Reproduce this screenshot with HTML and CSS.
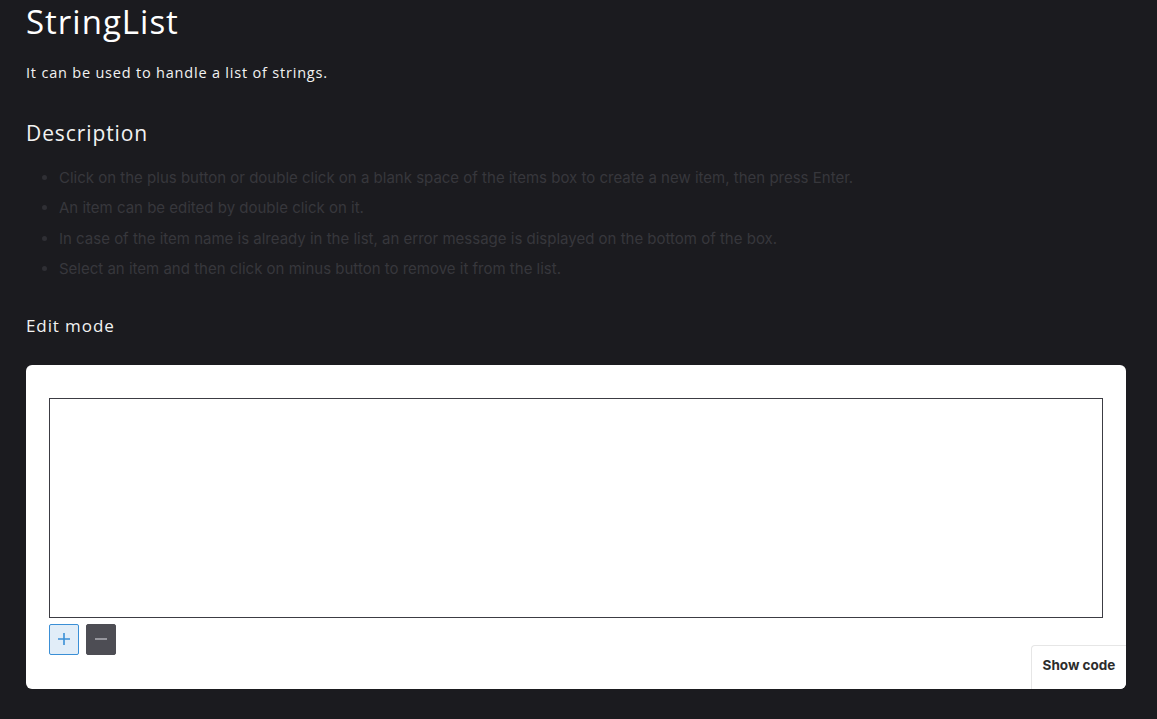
FILE: index.html
```html
<!DOCTYPE html>
<html lang="en">
<head>
<meta charset="utf-8">
<title>StringList</title>
<link rel="stylesheet" href="styles.css">
</head>
<body>
<main class="page">
  <h1 class="title">StringList</h1>
  <p class="lead">It can be used to handle a list of strings.</p>
  <h2 class="section">Description</h2>
  <ul class="notes">
    <li>Click on the plus button or double click on a blank space of the items box to create a new item, then press Enter.</li>
    <li>An item can be edited by double click on it.</li>
    <li>In case of the item name is already in the list, an error message is displayed on the bottom of the box.</li>
    <li>Select an item and then click on minus button to remove it from the list.</li>
  </ul>
  <h3 class="sub">Edit mode</h3>
  <section class="card">
    <div class="items"></div>
    <div class="tools">
      <button class="btn btn-plus" aria-label="Add">
        <svg width="14" height="14" viewBox="0 0 14 14"><path d="M7 1v12M1 7h12" stroke="#3a8fd6" stroke-width="1.6" fill="none"/></svg>
      </button>
      <button class="btn btn-minus" aria-label="Remove">
        <svg width="14" height="14" viewBox="0 0 14 14"><path d="M1 7h12" stroke="#a9a9b0" stroke-width="1.6" fill="none"/></svg>
      </button>
    </div>
    <button class="show-code">Show code</button>
  </section>
</main>
</body>
</html>
```
FILE: styles.css
```css
html, body {
  margin: 0;
  padding: 0;
  background: #1b1b1f;
}
.page {
  width: 1100px;
  padding: 0 0 30px 26px;
  font-family: "Open Sans", sans-serif;
  color: #ffffff;
}
.title {
  margin: 0;
  padding-top: 2px;
  font-size: 33px;
  font-weight: 400;
  line-height: 40px;
  letter-spacing: 1px;
}
.lead {
  margin: 20px 0 0;
  font-size: 14.5px;
  line-height: 22px;
  font-weight: 400;
  letter-spacing: 0.8px;
  color: #f2f2f2;
}
.section {
  margin: 34px 0 0;
  font-size: 21px;
  font-weight: 400;
  line-height: 30px;
  letter-spacing: 0.9px;
  color: #f2f2f2;
}
.notes {
  margin: 20px 0 0;
  padding-left: 33px;
  font-family: Inter, sans-serif;
  font-size: 15px;
  line-height: 20px;
  color: #37373c;
}
.notes li {
  margin-bottom: 10.3px;
}
.notes li::marker {
  color: #2f2f34;
}
.sub {
  margin: 35px 0 0;
  font-size: 17px;
  font-weight: 400;
  line-height: 24px;
  letter-spacing: 0.9px;
  color: #f2f2f2;
}
.card {
  position: relative;
  margin-top: 27px;
  background: #ffffff;
  border-radius: 6px;
  padding: 33px 23px 33px 23px;
  height: 258px;
  box-sizing: content-box;
}
.items {
  height: 218px;
  border: 1px solid #3c3c43;
}
.tools {
  display: flex;
  gap: 7px;
  margin-top: 6px;
}
.btn {
  width: 30px;
  height: 31px;
  border-radius: 2px;
  padding: 0;
  display: flex;
  align-items: center;
  justify-content: center;
  cursor: pointer;
}
.btn-plus {
  background: #e1edf8;
  border: 1px solid #3a8fd6;
}
.btn-minus {
  background: #4d4d54;
  border: 1px solid #4d4d54;
}
.show-code {
  position: absolute;
  right: 0;
  bottom: 0;
  width: 95px;
  height: 44px;
  background: #ffffff;
  border: 1px solid #e6e6e6;
  border-right: none;
  border-bottom: none;
  border-radius: 4px 0 6px 0;
  font-family: Inter, sans-serif;
  font-weight: 700;
  font-size: 13.5px;
  color: #2c2c2c;
  padding: 0 0 4px 0;
}
```
